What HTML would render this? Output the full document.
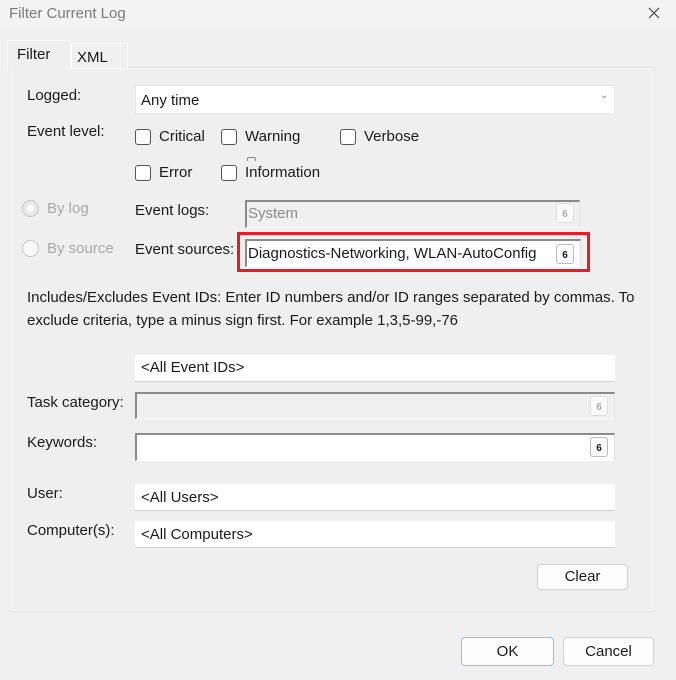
<!DOCTYPE html>
<html><head><style>
*{margin:0;padding:0;box-sizing:border-box}
body{width:676px;height:680px;background:#f0f0f0;font-family:"Liberation Sans",sans-serif;font-size:15px;color:#1a1a1a;position:relative;overflow:hidden}
.a{position:absolute;white-space:nowrap}
.box{position:absolute;background:#fff;border-bottom:1px solid #d0d0d0}
.sunk{position:absolute;border-top:2px solid #8a8a8a;border-left:2px solid #8a8a8a;border-right:1px solid #e0e0e0;border-bottom:1px solid #fff}
.cb{position:absolute;width:16px;height:16px;border:1px solid #555;border-radius:3px;background:#fff}
.rb{position:absolute;width:17px;height:17px;border:1px solid #c8c8c8;border-radius:50%;background:#f8f8f8}
.sb{position:absolute;width:18px;height:20px;border:1px solid #bbb;border-radius:3px;background:#fafafa;font-size:10px;font-weight:bold;text-align:center;line-height:22px}
.btn{position:absolute;background:#fdfdfd;border:1px solid #d0d0d0;border-radius:4px;text-align:center;line-height:24px}
</style></head><body>
<div class="a" style="left:0;top:0;width:676px;height:30px;background:#f3f3f3"></div>
<div class="a" style="left:9px;top:5px;font-size:15px;color:#7a7a7a">Filter Current Log</div>
<svg class="a" style="left:648px;top:7px" width="12" height="12"><path d="M1 1L11 11M11 1L1 11" stroke="#444" stroke-width="1.2"/></svg>
<div class="a" style="left:10px;top:68px;width:644px;height:543px;background:#efefef;border:1px solid #fafafa;outline:1px solid #e2e2e2"></div>
<div class="a" style="left:7px;top:40px;width:64px;height:30px;background:#efefef;border:1px solid #fafafa;border-bottom:none"></div>
<div class="a" style="left:17px;top:46px">Filter</div>
<div class="a" style="left:71px;top:43px;width:57px;height:25px;background:#f0f0f0;border:1px solid #fafafa;border-bottom:none"></div>
<div class="a" style="left:77px;top:49px">XML</div>

<div class="a" style="left:27px;top:87px">Logged:</div>
<div class="box" style="left:135px;top:85px;width:480px;height:29px;border:1px solid #e6e6e6"></div>
<div class="a" style="left:141px;top:92px">Any time</div>
<div class="a" style="left:600px;top:90px;font-size:10px;color:#888">⌄</div>

<div class="a" style="left:27px;top:123px">Event level:</div>
<div class="cb" style="left:135px;top:129px"></div><div class="a" style="left:159px;top:128px">Critical</div>
<div class="cb" style="left:221px;top:129px"></div><div class="a" style="left:245px;top:128px">Warning</div>
<div class="cb" style="left:340px;top:129px"></div><div class="a" style="left:364px;top:128px">Verbose</div>
<div class="cb" style="left:135px;top:165px"></div><div class="a" style="left:159px;top:164px">Error</div>
<div class="cb" style="left:221px;top:165px"></div><div class="a" style="left:245px;top:164px">Information</div>
<div class="a" style="left:247px;top:157px;width:9px;height:4px;border:1px solid #888;border-bottom:none;border-radius:2px 2px 0 0"></div>

<div class="rb" style="left:22px;top:200px;background:#e8e8e8"><div style="position:absolute;left:4px;top:4px;width:7px;height:7px;border-radius:50%;background:#fff"></div></div>
<div class="a" style="left:47px;top:200px;color:#a8a8a8">By log</div>
<div class="rb" style="left:22px;top:240px"></div>
<div class="a" style="left:47px;top:240px;color:#a8a8a8">By source</div>

<div class="a" style="left:135px;top:202px">Event logs:</div>
<div class="sunk" style="left:245px;top:200px;width:335px;height:28px;background:#f0f0f0"></div>
<div class="a" style="left:248px;top:205px;color:#8a8a8a">System</div>
<div class="sb" style="left:556px;top:203px;color:#aaa;border-color:#ddd">6</div>

<div class="a" style="left:135px;top:241px">Event sources:</div>
<div class="a" style="left:237px;top:232px;width:353px;height:40px;border:3px solid #e81c24"></div>
<div class="sunk" style="left:245px;top:239px;width:336px;height:28px;background:#fff"></div>
<div class="a" style="left:248px;top:245px">Diagnostics-Networking, WLAN-AutoConfig</div>
<div class="sb" style="left:556px;top:244px">6</div>

<div class="a" style="left:27px;top:289px">Includes/Excludes Event IDs: Enter ID numbers and/or ID ranges separated by commas. To</div>
<div class="a" style="left:27px;top:312px">exclude criteria, type a minus sign first. For example 1,3,5-99,-76</div>

<div class="box" style="left:135px;top:355px;width:480px;height:27px"></div>
<div class="a" style="left:141px;top:359px">&lt;All Event IDs&gt;</div>

<div class="a" style="left:27px;top:394px">Task category:</div>
<div class="sunk" style="left:135px;top:392px;width:480px;height:27px;background:#f0f0f0"></div>
<div class="sb" style="left:590px;top:396px;color:#aaa;border-color:#ddd">6</div>

<div class="a" style="left:27px;top:434px">Keywords:</div>
<div class="sunk" style="left:135px;top:433px;width:480px;height:28px;background:#fff"></div>
<div class="sb" style="left:590px;top:437px">6</div>

<div class="a" style="left:27px;top:485px">User:</div>
<div class="box" style="left:135px;top:484px;width:480px;height:27px"></div>
<div class="a" style="left:141px;top:489px">&lt;All Users&gt;</div>
<div class="a" style="left:27px;top:522px">Computer(s):</div>
<div class="box" style="left:135px;top:521px;width:480px;height:27px"></div>
<div class="a" style="left:141px;top:526px">&lt;All Computers&gt;</div>

<div class="btn" style="left:537px;top:564px;width:91px;height:26px">Clear</div>
<div class="btn" style="left:461px;top:637px;width:93px;height:29px;line-height:27px;border-color:#8fbfe8">OK</div>
<div class="btn" style="left:563px;top:637px;width:91px;height:29px;line-height:27px">Cancel</div>
</body></html>
